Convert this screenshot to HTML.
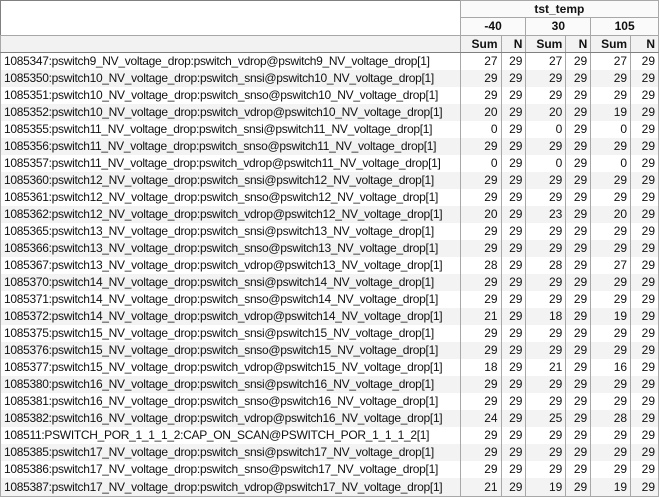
<!DOCTYPE html>
<html><head><meta charset="utf-8"><style>
html,body{margin:0;padding:0;background:#fff;width:659px;height:498px;overflow:hidden}
table{border-collapse:collapse;table-layout:fixed;font-family:"Liberation Sans",sans-serif;font-size:12px;color:#111;position:absolute;left:0;top:0}
td,th{padding:0 3px;white-space:nowrap;overflow:hidden;border-left:1px solid #a8a8a8;border-right:1px solid #a8a8a8}
th{font-weight:bold;text-align:center;border:1px solid #a8a8a8;background:#fafafa;height:16px;line-height:16px}
th.r{text-align:right}
thead tr.m th{height:17px;line-height:17px}
thead tr.s th{background:#f2f2f2;border-bottom:1px solid #808080}
td{text-align:right;height:17px;line-height:17px}
td.l{text-align:left;letter-spacing:-0.3px}
tbody tr:nth-child(even) td{background:#f3f3f3}
tbody tr:last-child td{border-bottom:1px solid #a8a8a8;height:18px}
</style></head><body>
<table>
<colgroup><col style="width:460px"><col style="width:41px"><col style="width:25px"><col style="width:40px"><col style="width:25px"><col style="width:40px"><col style="width:28px"></colgroup>
<thead>
<tr><th rowspan="2" style="border-left:1px solid #808080;border-top:1px solid #808080;background:#fff"></th><th colspan="6">tst_temp</th></tr>
<tr class="m"><th colspan="2">-40</th><th colspan="2">30</th><th colspan="2">105</th></tr>
<tr class="s"><th></th><th class="r">Sum</th><th class="r">N</th><th class="r">Sum</th><th class="r">N</th><th class="r">Sum</th><th class="r">N</th></tr>
</thead>
<tbody>
<tr><td class="l">1085347:pswitch9_NV_voltage_drop:pswitch_vdrop@pswitch9_NV_voltage_drop[1]</td><td>27</td><td>29</td><td>27</td><td>29</td><td>27</td><td>29</td></tr>
<tr><td class="l">1085350:pswitch10_NV_voltage_drop:pswitch_snsi@pswitch10_NV_voltage_drop[1]</td><td>29</td><td>29</td><td>29</td><td>29</td><td>29</td><td>29</td></tr>
<tr><td class="l">1085351:pswitch10_NV_voltage_drop:pswitch_snso@pswitch10_NV_voltage_drop[1]</td><td>29</td><td>29</td><td>29</td><td>29</td><td>29</td><td>29</td></tr>
<tr><td class="l">1085352:pswitch10_NV_voltage_drop:pswitch_vdrop@pswitch10_NV_voltage_drop[1]</td><td>20</td><td>29</td><td>20</td><td>29</td><td>19</td><td>29</td></tr>
<tr><td class="l">1085355:pswitch11_NV_voltage_drop:pswitch_snsi@pswitch11_NV_voltage_drop[1]</td><td>0</td><td>29</td><td>0</td><td>29</td><td>0</td><td>29</td></tr>
<tr><td class="l">1085356:pswitch11_NV_voltage_drop:pswitch_snso@pswitch11_NV_voltage_drop[1]</td><td>29</td><td>29</td><td>29</td><td>29</td><td>29</td><td>29</td></tr>
<tr><td class="l">1085357:pswitch11_NV_voltage_drop:pswitch_vdrop@pswitch11_NV_voltage_drop[1]</td><td>0</td><td>29</td><td>0</td><td>29</td><td>0</td><td>29</td></tr>
<tr><td class="l">1085360:pswitch12_NV_voltage_drop:pswitch_snsi@pswitch12_NV_voltage_drop[1]</td><td>29</td><td>29</td><td>29</td><td>29</td><td>29</td><td>29</td></tr>
<tr><td class="l">1085361:pswitch12_NV_voltage_drop:pswitch_snso@pswitch12_NV_voltage_drop[1]</td><td>29</td><td>29</td><td>29</td><td>29</td><td>29</td><td>29</td></tr>
<tr><td class="l">1085362:pswitch12_NV_voltage_drop:pswitch_vdrop@pswitch12_NV_voltage_drop[1]</td><td>20</td><td>29</td><td>23</td><td>29</td><td>20</td><td>29</td></tr>
<tr><td class="l">1085365:pswitch13_NV_voltage_drop:pswitch_snsi@pswitch13_NV_voltage_drop[1]</td><td>29</td><td>29</td><td>29</td><td>29</td><td>29</td><td>29</td></tr>
<tr><td class="l">1085366:pswitch13_NV_voltage_drop:pswitch_snso@pswitch13_NV_voltage_drop[1]</td><td>29</td><td>29</td><td>29</td><td>29</td><td>29</td><td>29</td></tr>
<tr><td class="l">1085367:pswitch13_NV_voltage_drop:pswitch_vdrop@pswitch13_NV_voltage_drop[1]</td><td>28</td><td>29</td><td>28</td><td>29</td><td>27</td><td>29</td></tr>
<tr><td class="l">1085370:pswitch14_NV_voltage_drop:pswitch_snsi@pswitch14_NV_voltage_drop[1]</td><td>29</td><td>29</td><td>29</td><td>29</td><td>29</td><td>29</td></tr>
<tr><td class="l">1085371:pswitch14_NV_voltage_drop:pswitch_snso@pswitch14_NV_voltage_drop[1]</td><td>29</td><td>29</td><td>29</td><td>29</td><td>29</td><td>29</td></tr>
<tr><td class="l">1085372:pswitch14_NV_voltage_drop:pswitch_vdrop@pswitch14_NV_voltage_drop[1]</td><td>21</td><td>29</td><td>18</td><td>29</td><td>19</td><td>29</td></tr>
<tr><td class="l">1085375:pswitch15_NV_voltage_drop:pswitch_snsi@pswitch15_NV_voltage_drop[1]</td><td>29</td><td>29</td><td>29</td><td>29</td><td>29</td><td>29</td></tr>
<tr><td class="l">1085376:pswitch15_NV_voltage_drop:pswitch_snso@pswitch15_NV_voltage_drop[1]</td><td>29</td><td>29</td><td>29</td><td>29</td><td>29</td><td>29</td></tr>
<tr><td class="l">1085377:pswitch15_NV_voltage_drop:pswitch_vdrop@pswitch15_NV_voltage_drop[1]</td><td>18</td><td>29</td><td>21</td><td>29</td><td>16</td><td>29</td></tr>
<tr><td class="l">1085380:pswitch16_NV_voltage_drop:pswitch_snsi@pswitch16_NV_voltage_drop[1]</td><td>29</td><td>29</td><td>29</td><td>29</td><td>29</td><td>29</td></tr>
<tr><td class="l">1085381:pswitch16_NV_voltage_drop:pswitch_snso@pswitch16_NV_voltage_drop[1]</td><td>29</td><td>29</td><td>29</td><td>29</td><td>29</td><td>29</td></tr>
<tr><td class="l">1085382:pswitch16_NV_voltage_drop:pswitch_vdrop@pswitch16_NV_voltage_drop[1]</td><td>24</td><td>29</td><td>25</td><td>29</td><td>28</td><td>29</td></tr>
<tr><td class="l">108511:PSWITCH_POR_1_1_1_2:CAP_ON_SCAN@PSWITCH_POR_1_1_1_2[1]</td><td>29</td><td>29</td><td>29</td><td>29</td><td>29</td><td>29</td></tr>
<tr><td class="l">1085385:pswitch17_NV_voltage_drop:pswitch_snsi@pswitch17_NV_voltage_drop[1]</td><td>29</td><td>29</td><td>29</td><td>29</td><td>29</td><td>29</td></tr>
<tr><td class="l">1085386:pswitch17_NV_voltage_drop:pswitch_snso@pswitch17_NV_voltage_drop[1]</td><td>29</td><td>29</td><td>29</td><td>29</td><td>29</td><td>29</td></tr>
<tr><td class="l">1085387:pswitch17_NV_voltage_drop:pswitch_vdrop@pswitch17_NV_voltage_drop[1]</td><td>21</td><td>29</td><td>19</td><td>29</td><td>19</td><td>29</td></tr>
</tbody>
</table>
</body></html>
